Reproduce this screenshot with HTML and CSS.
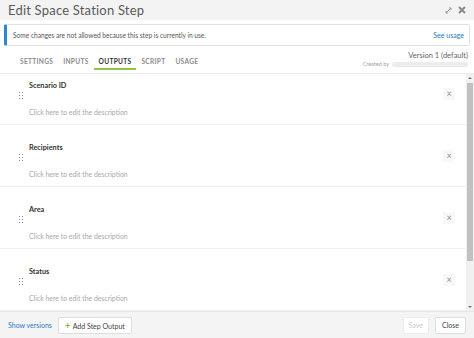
FILE: index.html
```html
<!DOCTYPE html>
<html>
<head>
<meta name="viewport" content="width=device-width, initial-scale=1">
<link rel="stylesheet" href="styles.css">
</head>
<body>
<div class="dialog">
    <div class="titleBar">
        <div class="title">Edit Space Station Step</div>
        <div class="titleIcons">
            <svg width="7" height="7" viewBox="0 0 7 7"><path d="M1 6 L6 1 M4 1 L6 1 L6 3 M1 4 L1 6 L3 6" stroke="#9a9a9a" stroke-width="1" fill="none"/></svg>
            <svg width="8" height="8" viewBox="0 0 8 8"><path d="M1 1 L7 7 M7 1 L1 7" stroke="#8a8a8a" stroke-width="2"/></svg>
        </div>
    </div>

    <div class="alert">
        <span>Some changes are not allowed because this step is currently in use.</span>
        <a href="#" class="link">See usage</a>
    </div>

    <div class="tabBar">
        <div class="tabs">
            <a href="#" class="tab">SETTINGS</a>
            <a href="#" class="tab">INPUTS</a>
            <a href="#" class="tab active">OUTPUTS</a>
            <a href="#" class="tab">SCRIPT</a>
            <a href="#" class="tab">USAGE</a>
        </div>
        <div class="versionInfo">
            <div class="version">Version 1 (default)</div>
            <div class="created">Created by <span class="blurred"></span></div>
        </div>
    </div>

    <div class="listArea">
        <div class="list">
            <div class="row first">
                <div class="handle"><svg width="4" height="8" viewBox="0 0 4 8"><path d="M0 0h1v1h-1zM3 0h1v1h-1zM0 3h1v1h-1zM3 3h1v1h-1zM0 6h1v1h-1zM3 6h1v1h-1z" fill="#8a8a8a"/></svg></div>
                <div class="rowText">
                    <div class="rowTitle">Scenario ID</div>
                    <div class="rowDesc">Click here to edit the description</div>
                </div>
                <div class="remove">&times;</div>
            </div>
            <div class="row">
                <div class="handle"><svg width="4" height="8" viewBox="0 0 4 8"><path d="M0 0h1v1h-1zM3 0h1v1h-1zM0 3h1v1h-1zM3 3h1v1h-1zM0 6h1v1h-1zM3 6h1v1h-1z" fill="#8a8a8a"/></svg></div>
                <div class="rowText">
                    <div class="rowTitle">Recipients</div>
                    <div class="rowDesc">Click here to edit the description</div>
                </div>
                <div class="remove">&times;</div>
            </div>
            <div class="row">
                <div class="handle"><svg width="4" height="8" viewBox="0 0 4 8"><path d="M0 0h1v1h-1zM3 0h1v1h-1zM0 3h1v1h-1zM3 3h1v1h-1zM0 6h1v1h-1zM3 6h1v1h-1z" fill="#8a8a8a"/></svg></div>
                <div class="rowText">
                    <div class="rowTitle">Area</div>
                    <div class="rowDesc">Click here to edit the description</div>
                </div>
                <div class="remove">&times;</div>
            </div>
            <div class="row">
                <div class="handle"><svg width="4" height="8" viewBox="0 0 4 8"><path d="M0 0h1v1h-1zM3 0h1v1h-1zM0 3h1v1h-1zM3 3h1v1h-1zM0 6h1v1h-1zM3 6h1v1h-1z" fill="#8a8a8a"/></svg></div>
                <div class="rowText">
                    <div class="rowTitle">Status</div>
                    <div class="rowDesc">Click here to edit the description</div>
                </div>
                <div class="remove">&times;</div>
            </div>
        </div>
        <div class="scrollbar">
            <div class="arrowUp"></div>
            <div class="thumb"></div>
            <div class="arrowDown"></div>
        </div>
    </div>

    <div class="footer">
        <a href="#" class="link">Show versions</a>
        <a href="#" class="btn"><span class="plus">+</span> Add Step Output</a>
        <div class="spacer"></div>
        <a href="#" class="btn disabled">Save</a>
        <a href="#" class="btn">Close</a>
    </div>
</div>
</body>
</html>
```

FILE: styles.css
```css
html, body {
    margin: 0px;
    height: 100%;
}

body {
    font-family: Lato, "Open Sans", Arial, sans-serif;
    background: #ffffff;
    color: #333333;
}

a {
    text-decoration: none;
}

.dialog {
    width: 474px;
    height: 338px;
    display: flex;
    flex-direction: column;
    overflow: hidden;
}

.titleBar {
    height: 20px;
    background: #f3f3f3;
    display: flex;
    align-items: center;
    padding: 0px 8px 0px 8px;
    flex-shrink: 0;
}

.title {
    font-size: 13px;
    color: #5a5a5a;
    letter-spacing: 0.2px;
    flex: 1;
}

.titleIcons {
    display: flex;
    align-items: center;
    gap: 6px;
}

.alert {
    margin: 4px 4px 0px 4px;
    height: 20px;
    border: 1px solid #e2e2e2;
    border-left: 3px solid #2b87d0;
    border-radius: 2px;
    display: flex;
    align-items: center;
    justify-content: space-between;
    padding: 0px 5px 0px 6px;
    font-size: 6.6px;
    color: #555555;
    flex-shrink: 0;
}

.link {
    color: #2b7bc0;
    font-size: 7px;
}

.tabBar {
    height: 27px;
    display: flex;
    justify-content: space-between;
    padding: 0px 6px 0px 20px;
    border-bottom: 1px solid #ececec;
    flex-shrink: 0;
}

.tabs {
    display: flex;
    gap: 10px;
}

.tab {
    font-size: 6.6px;
    font-weight: bold;
    letter-spacing: 0.3px;
    color: #8c8c8c;
    padding-top: 8px;
    height: 16px;
    box-sizing: border-box;
    margin-top: 3px;
}

.tab.active {
    color: #333333;
    border-bottom: 2px solid #96c342;
    padding-left: 5px;
    padding-right: 5px;
    margin-left: -5px;
    margin-right: -5px;
    height: 21px;
}

.versionInfo {
    text-align: right;
    padding-top: 5px;
}

.version {
    font-size: 7.5px;
    color: #666666;
}

.created {
    font-size: 5.5px;
    color: #a0a0a0;
    display: flex;
    align-items: center;
    justify-content: flex-end;
    gap: 3px;
    margin-top: 1px;
}

.blurred {
    display: inline-block;
    width: 76px;
    height: 5px;
    background: #ececec;
    border-radius: 2px;
}

.listArea {
    flex: 1;
    display: flex;
    overflow: hidden;
    min-height: 0;
}

.list {
    flex: 1;
    overflow: hidden;
}

.row {
    height: 62px;
    border-bottom: 1px solid #f1f1f1;
    display: flex;
    box-sizing: border-box;
}

.row.first {
    margin-top: -11px;
}

.handle {
    width: 29px;
    padding: 21px 0px 0px 19px;
    box-sizing: border-box;
}

.rowText {
    flex: 1;
    padding-top: 18px;
}

.rowTitle {
    font-size: 7.3px;
    font-weight: bold;
    color: #333333;
}

.rowDesc {
    font-size: 6.9px;
    color: #a8a8a8;
    margin-top: 18px;
}

.remove {
    width: 12px;
    height: 12px;
    margin: 25px 11px 0px 0px;
    background: #f8f8f8;
    color: #8f8f8f;
    font-size: 9px;
    line-height: 12px;
    text-align: center;
}

.scrollbar {
    width: 8px;
    background: #f1f1f1;
    display: flex;
    flex-direction: column;
    align-items: center;
}

.arrowUp {
    margin-top: 3px;
    width: 0px;
    height: 0px;
    border-left: 2px solid transparent;
    border-right: 2px solid transparent;
    border-bottom: 2px solid #707070;
}

.thumb {
    width: 6px;
    height: 178px;
    margin-top: 4px;
    background: #c1c1c1;
}

.arrowDown {
    margin-top: auto;
    margin-bottom: 3px;
    width: 0px;
    height: 0px;
    border-left: 2px solid transparent;
    border-right: 2px solid transparent;
    border-top: 2px solid #707070;
}

.footer {
    height: 27px;
    background: #f4f4f4;
    border-top: 1px solid #e6e6e6;
    display: flex;
    align-items: center;
    padding: 0px 8px 0px 8px;
    gap: 6px;
    flex-shrink: 0;
    box-sizing: border-box;
}

.spacer {
    flex: 1;
}

.btn {
    height: 17px;
    line-height: 15px;
    box-sizing: border-box;
    padding: 0px 6px 0px 6px;
    background: #ffffff;
    border: 1px solid #dedede;
    border-radius: 2px;
    font-size: 7px;
    color: #444444;
}

.btn.disabled {
    color: #cccccc;
    border-color: #ececec;
    padding: 0px 5px 0px 5px;
}

.plus {
    color: #7cb342;
    font-weight: bold;
    font-size: 9px;
    margin-right: 1px;
}
```
